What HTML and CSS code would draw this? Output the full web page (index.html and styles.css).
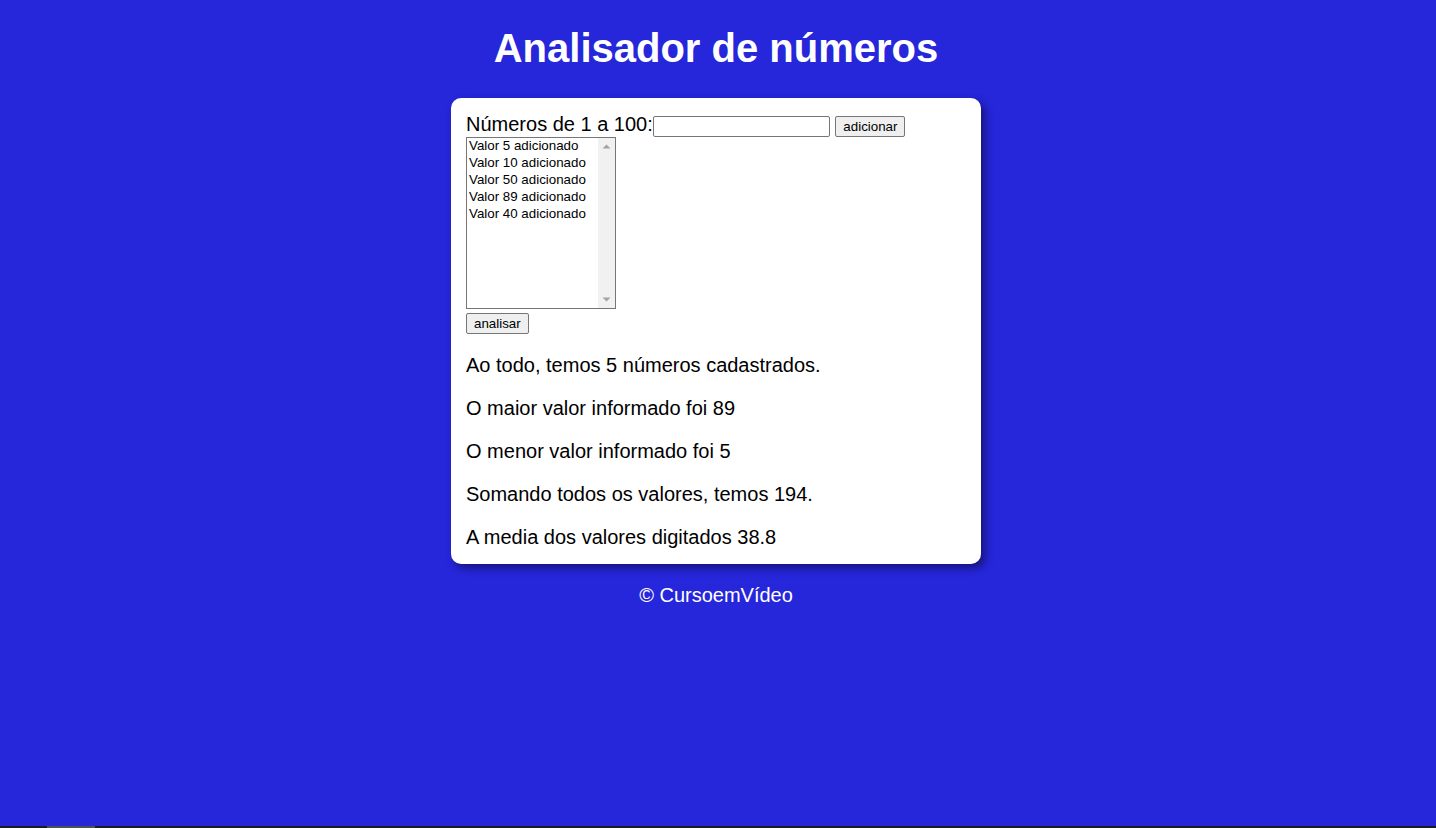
FILE: index.html
```html
<!DOCTYPE html>
<html lang="pt-br">
<head>
<meta charset="UTF-8">
<title>Analisador de números</title>
<link rel="stylesheet" href="styles.css">
</head>
<body>
<header>
  <h1 class="title">Analisador de números</h1>
</header>
<section class="card">
  <div class="entry">Números de 1 a 100:<input type="number" class="field" id="fnum"> <input type="button" class="btn" value="adicionar"></div>
  <div class="listing">
    <span class="listbox"><span class="listbox-inner">
      <select class="list" id="flista" size="10">
        <option>Valor 5 adicionado</option>
        <option>Valor 10 adicionado</option>
        <option>Valor 50 adicionado</option>
        <option>Valor 89 adicionado</option>
        <option>Valor 40 adicionado</option>
      </select>
      <span class="scrollbar" aria-hidden="true">
        <svg class="arrow" width="17" height="17" viewBox="0 0 17 17"><path d="M4.5 10.5 L8.5 6.5 L12.5 10.5 Z" fill="#a3a3a3"/></svg>
        <svg class="arrow" width="17" height="17" viewBox="0 0 17 17"><path d="M4.5 6.5 L8.5 10.5 L12.5 6.5 Z" fill="#a3a3a3"/></svg>
      </span>
    </span></span><br>
    <input type="button" class="btn" value="analisar">
  </div>
  <div class="result">
    <p class="line">Ao todo, temos 5 números cadastrados.</p>
    <p class="line">O maior valor informado foi 89</p>
    <p class="line">O menor valor informado foi 5</p>
    <p class="line">Somando todos os valores, temos 194.</p>
    <p class="line">A media dos valores digitados 38.8</p>
  </div>
</section>
<footer class="foot">
  <p class="copy">&copy; CursoemVídeo</p>
</footer>
<div class="bottombar"><span class="bottomthumb"></span></div>
</body>
</html>
```
FILE: styles.css
```css
html {
  background: #2626db;
}

body {
  margin: 8px;
  padding-right: 4px;
  background: #2626db;
  font-family: "Liberation Sans", Arial, sans-serif;
}

.title {
  color: #ffffff;
  text-align: center;
  font-size: 40px;
  font-weight: bold;
  margin: 18.3px 0 26.8px;
}

.card {
  background: #ffffff;
  width: 500px;
  margin: 0 auto;
  padding: 15px;
  border-radius: 10px;
  box-shadow: 4px 4px 8px rgba(0, 0, 0, 0.45);
  font-size: 20px;
  color: #000000;
}

.listing {
  font-size: 16px;
}

.field {
  box-sizing: border-box;
  width: 177px;
  height: 21px;
  margin: 0;
  padding: 1px 2px;
  border: 1px solid #767676;
  border-radius: 2px;
  font: 13.33px "Liberation Sans", Arial, sans-serif;
  background: #ffffff;
  -moz-appearance: textfield;
}

.field::-webkit-inner-spin-button,
.field::-webkit-outer-spin-button {
  -webkit-appearance: none;
  margin: 0;
}

.btn {
  box-sizing: border-box;
  height: 21px;
  margin: 0;
  padding: 1px 7px;
  border: 1px solid #767676;
  border-radius: 2px;
  background: #efefef;
  color: #000000;
  font: 13.33px "Liberation Sans", Arial, sans-serif;
  -webkit-appearance: none;
  appearance: none;
}

.listbox {
  display: inline-block;
  box-sizing: border-box;
  width: 150px;
  height: 172px;
  border: 1px solid #767676;
  background: #ffffff;
  overflow: hidden;
  vertical-align: baseline;
}

.listbox-inner {
  display: flex;
  height: 100%;
}

.list {
  flex: 1;
  min-width: 0;
  height: 170px;
  margin: 0;
  padding: 0;
  border: none;
  outline: none;
  background: #ffffff;
  font: 13.33px "Liberation Sans", Arial, sans-serif;
  color: #000000;
  overflow: hidden;
}

.list option {
  padding: 0 2px 1px;
  line-height: 16px;
}

.scrollbar {
  display: flex;
  flex-direction: column;
  justify-content: space-between;
  width: 17px;
  flex: none;
  background: #f1f1f1;
}

.arrow {
  display: block;
}

.line {
  margin: 20px 0;
}

.line:last-child {
  margin-bottom: 0;
}

.foot {
  text-align: center;
}

.copy {
  color: #ffffff;
  font-size: 20px;
  margin: 20px 0;
}

.bottombar {
  position: fixed;
  left: 0;
  right: 0;
  bottom: 0;
  height: 2px;
  background: #1c1c1c;
  display: flex;
  padding-left: 47px;
}

.bottomthumb {
  width: 48px;
  background: #505050;
}
```
